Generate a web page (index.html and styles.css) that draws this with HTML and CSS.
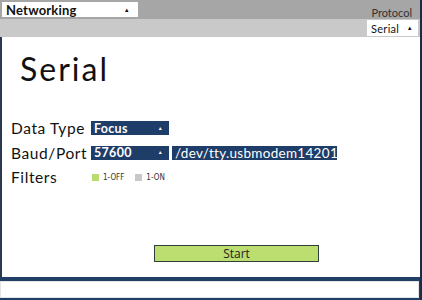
FILE: index.html
```html
<!DOCTYPE html>
<html>
<head>
<meta charset="utf-8">
<link rel="stylesheet" href="styles.css">
</head>
<body>
<div class="app">
  <div class="topbar">
    <div class="select net"><span>Networking</span><span class="arrow">▲</span></div>
    <div class="protocol-label">Protocol</div>
  </div>
  <div class="subbar">
    <div class="select proto"><span>Serial</span><span class="arrow">▲</span></div>
  </div>
  <div class="content">
    <h1 class="title">Serial</h1>
    <div class="form">
      <div class="row">
        <div class="label">Data Type</div>
        <div class="dd"><span>Focus</span><span class="arrow">▲</span></div>
      </div>
      <div class="row">
        <div class="label">Baud/Port</div>
        <div class="dd"><span>57600</span><span class="arrow">▲</span></div>
        <div class="port">/dev/tty.usbmodem14201</div>
      </div>
      <div class="row">
        <div class="label">Filters</div>
        <div class="legend">
          <span class="sw green"></span><span class="lt">1-OFF</span>
          <span class="sw grey"></span><span class="lt">1-ON</span>
        </div>
      </div>
    </div>
    <div class="start-wrap"><button class="start">Start</button></div>
  </div>
  <div class="bottom">
    <div class="console"></div>
  </div>
</div>
</body>
</html>
```
FILE: styles.css
```css
html, body { margin: 0; padding: 0; background: #fff; }
body { width: 422px; height: 300px; overflow: hidden; font-family: Lato, "Open Sans", sans-serif; }
.app { width: 422px; height: 300px; display: flex; flex-direction: column; box-sizing: border-box; border-right: 2px solid #1c2c44; }
.topbar { height: 19px; background: #a6a6a6; display: flex; align-items: center; justify-content: space-between; padding: 0 8px 0 2px; flex: none; }
.select { background: #fff; color: #111; display: flex; align-items: center; justify-content: space-between; box-sizing: border-box; }
.arrow { font-size: 6px; line-height: 1; }
.net { width: 136px; height: 15px; padding: 0 8px 0 4px; font-size: 13px; font-weight: bold; letter-spacing: 0.2px; }
.protocol-label { font-size: 11px; color: #333; padding-top: 5px; }
.subbar { height: 18px; background: #c9c9c9; display: flex; justify-content: flex-end; align-items: center; padding-right: 2px; flex: none; }
.proto { width: 51px; height: 16px; padding: 0 5px 0 4px; font-size: 11px; letter-spacing: 0.3px; }
.content { flex: 1; border-left: 2px solid #2b3a4f; display: flex; flex-direction: column; }
.title { margin: 14px 0 0 18px; font-size: 32px; font-weight: normal; color: #111; line-height: 36px; letter-spacing: 2px; }
.form { margin: 34px 0 0 9px; display: flex; flex-direction: column; gap: 10.5px; }
.row { display: flex; align-items: center; height: 14px; }
.label { width: 80px; font-size: 15.5px; color: #111; letter-spacing: 0.6px; }
.dd { width: 78px; height: 14px; background: #1e3d68; color: #fff; display: flex; justify-content: space-between; align-items: center; padding: 0 6px 0 3px; box-sizing: border-box; font-size: 12.5px; font-weight: bold; letter-spacing: 0.3px; }
.dd .arrow { font-size: 5px; }
.port { margin-left: 3px; width: 165px; height: 14px; background: #1e3d68; color: #fff; font-size: 13.5px; padding-left: 3px; box-sizing: border-box; line-height: 14px; white-space: nowrap; overflow: hidden; letter-spacing: 0.3px; }
.legend { display: flex; align-items: center; padding-left: 1px; }
.sw { width: 7px; height: 7px; display: inline-block; }
.sw.green { background: #b9dd6c; }
.sw.grey { background: #c8c8c8; margin-left: 11px; }
.lt { font-family: "DejaVu Sans Condensed", "DejaVu Sans", sans-serif; font-size: 8px; color: #333; margin-left: 4px; }
.start-wrap { margin-top: auto; margin-bottom: 15px; padding-left: 152px; }
.start { width: 165px; height: 17px; background: #bcdd70; border: 1px solid #2f3f3a; font-family: "Open Sans", sans-serif; font-size: 12px; color: #222; padding: 0; line-height: 15px; }
.bottom { height: 23px; flex: none; background: #1f3f66; padding: 4px 0 2px 0; box-sizing: border-box; }
.console { height: 17px; background: #fff; border: 1px solid #e4e4e4; box-sizing: border-box; margin-right: 1px; }
```
